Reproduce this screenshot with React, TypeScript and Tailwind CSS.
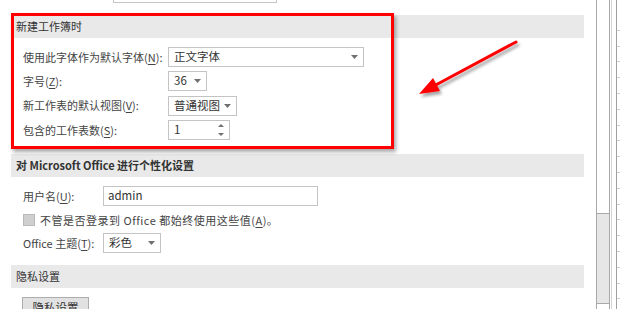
import React from "react";

const font = { fontFamily: '"Noto Sans CJK SC", "Noto Sans", sans-serif' };

function Caret() {
  return (
    <svg width="7" height="4" viewBox="0 0 7 4" className="shrink-0">
      <path d="M0 0 L7 0 L3.5 4 Z" fill="#707070" />
    </svg>
  );
}

function Select({ w, text }: { w: string; text: string }) {
  return (
    <div className={`${w} h-[20px] shrink-0 border border-[#c4c4c4] bg-white flex items-center justify-between pl-[5px] pr-[5px]`}>
      <span className="text-[11.5px] text-[#333] leading-none whitespace-nowrap">{text}</span>
      <Caret />
    </div>
  );
}

function Band({ children, bold = false }: { children: React.ReactNode; bold?: boolean }) {
  return (
    <div className={`h-[23px] bg-[#e9e9e9] flex items-center pl-[5px] text-[11px] text-[#333] whitespace-nowrap ${bold ? "font-bold" : ""}`}>
      {children}
    </div>
  );
}

function U({ c }: { c: string }) {
  return <span className="underline underline-offset-2">{c}</span>;
}

export default function App() {
  return (
    <div className="relative w-[620px] h-[309px] bg-white overflow-hidden flex" style={font}>
      {/* main column */}
      <div className="w-[584px] shrink-0 pl-[11px]">
        {/* top input remnant */}
        <div className="ml-[102px] w-[164px] h-[3px] border-x border-b border-[#c4c4c4]" />
        <div className="h-[12px]" />
        <Band>新建工作簿时</Band>
        <div className="flex flex-col pl-[12px] pt-[9px] gap-[4px] text-[11px] text-[#444] whitespace-nowrap">
          <div className="flex items-center h-[20px]">
            <span className="w-[145px] shrink-0">使用此字体作为默认字体(<U c="N" />):</span>
            <Select w="w-[196px]" text="正文字体" />
          </div>
          <div className="flex items-center h-[20px]">
            <span className="w-[145px] shrink-0">字号(<U c="Z" />):</span>
            <Select w="w-[39px]" text="36" />
          </div>
          <div className="flex items-center h-[21px]">
            <span className="w-[145px] shrink-0">新工作表的默认视图(<U c="V" />):</span>
            <Select w="w-[69px]" text="普通视图" />
          </div>
          <div className="flex items-center h-[20px]">
            <span className="w-[145px] shrink-0">包含的工作表数(<U c="S" />):</span>
            <div className="w-[62px] h-[20px] border border-[#c4c4c4] flex items-center justify-between pl-[5px] pr-[5px]">
              <span className="text-[11.5px] text-[#333] leading-none">1</span>
              <svg width="6" height="14" viewBox="0 0 6 14">
                <path d="M0 4 L6 4 L3 1 Z" fill="#707070" />
                <path d="M0 10 L6 10 L3 13 Z" fill="#707070" />
              </svg>
            </div>
          </div>
        </div>
        <div className="h-[14px]" />
        <Band bold>对 Microsoft Office 进行个性化设置</Band>
        <div className="flex flex-col pl-[12px] pt-[9px] text-[11px] text-[#444] whitespace-nowrap">
          <div className="flex items-center h-[20px]">
            <span className="w-[80px] shrink-0">用户名(<U c="U" />):</span>
            <div className="w-[215px] h-[20px] border border-[#c4c4c4] flex items-center pl-[4px]">
              <span className="text-[11.5px] text-[#333]">admin</span>
            </div>
          </div>
          <div className="flex items-center h-[16px] mt-[6px]">
            <div className="w-[12px] h-[12px] shrink-0 bg-[#cfcfcf] border border-[#b9b9b9] mr-[5px]" />
            <span className="tracking-[0.5px]">不管是否登录到 Office 都始终使用这些值(<U c="A" />)。</span>
          </div>
          <div className="flex items-center h-[20px] mt-[5px]">
            <span className="w-[80px] shrink-0">Office 主题(<U c="T" />):</span>
            <Select w="w-[58px]" text="彩色" />
          </div>
        </div>
        <div className="h-[12px]" />
        <Band>隐私设置</Band>
        <div className="pl-[11px] pt-[9px]">
          <div className="w-[67px] h-[22px] bg-[#e1e1e1] border border-[#adadad] flex items-center justify-center text-[11.5px] text-[#333]">
            隐私设置
          </div>
        </div>
      </div>
      {/* gap before scrollbar */}
      <div className="w-[12px] shrink-0" />
      {/* scrollbar */}
      <div className="w-[14px] shrink-0 h-full border-x border-[#a8a8a8] flex flex-col">
        <div className="h-[214px] shrink-0 bg-white border-b border-[#a8a8a8]" />
        <div className="h-[90px] shrink-0 bg-[#e6e6e6] border-b border-[#a8a8a8]" />
      </div>
      <div className="w-[1px] shrink-0 h-full bg-white" />
      <div className="w-[1px] shrink-0 h-full bg-[#d4d4d4]" />
      <div className="w-[4px] shrink-0" />
      <div className="w-[4px] shrink-0 h-full border-l border-[#a0a0a0] flex flex-col pt-[15px]">
        {Array.from({ length: 19 }).map((_, i) => (
          <div key={i} className="h-[15.8px] shrink-0 border-b border-[#d0d0d0]" />
        ))}
      </div>

      {/* annotation: red rectangle */}
      <div className="absolute left-[11px] top-[13px] w-[383px] h-[136px] border-[3px] border-[#ff0000] shadow-[2px_3px_4px_rgba(0,0,0,0.35)]" />
      {/* annotation: arrow */}
      <svg className="absolute left-0 top-0" width="620" height="309" viewBox="0 0 620 309">
        <defs>
          <filter id="sh" x="-20%" y="-20%" width="140%" height="140%">
            <feDropShadow dx="2" dy="3" stdDeviation="1.5" floodColor="#000" floodOpacity="0.35" />
          </filter>
        </defs>
        <g filter="url(#sh)">
          <line x1="516" y1="42" x2="432" y2="87" stroke="#ff0000" strokeWidth="3" strokeLinecap="round" />
          <path d="M419 94 L433 78 L440 91 Z" fill="#ff0000" />
        </g>
      </svg>
    </div>
  );
}
